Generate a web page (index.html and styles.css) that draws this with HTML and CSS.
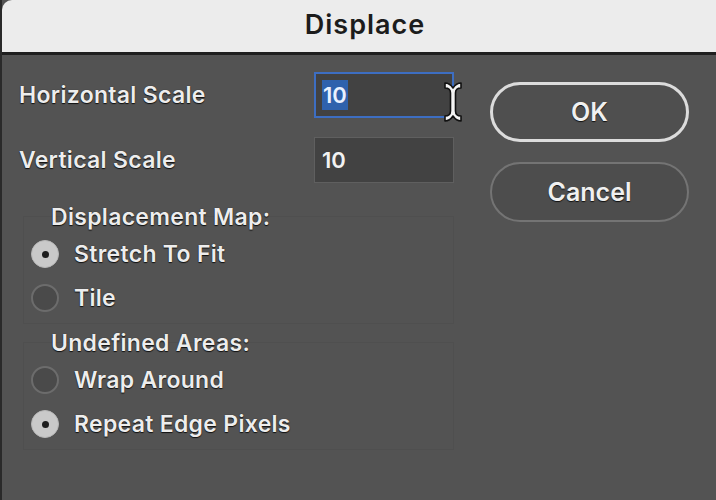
FILE: index.html
```html
<!DOCTYPE html>
<html lang="en">
<head>
  <meta charset="UTF-8" />
  <title>Displace</title>
  <link rel="stylesheet" href="styles.css">
</head>
<body>

  <div class="dialog">
    <!-- Title bar -->
    <div class="titlebar">Displace</div>

    <div class="dialog-body">
      <!-- Left: fields and option groups -->
      <div class="options">
        <div class="field-row">
          <label class="field-label">Horizontal Scale</label>
          <div class="text-field focused">
            <span class="selected-text">10</span>
            <!-- I-beam cursor over the field -->
            <svg class="ibeam" width="22" height="44" viewBox="0 0 22 44">
              <path d="M3 3 C7 3 9 5 11 8 C13 5 15 3 19 3 L19 8 C15 8 13.5 10 13.5 13 L13.5 31 C13.5 34 15 36 19 36 L19 41 C15 41 13 39 11 36 C9 39 7 41 3 41 L3 36 C7 36 8.5 34 8.5 31 L8.5 13 C8.5 10 7 8 3 8 Z"
                    fill="#f4f4f4" stroke="#111" stroke-width="1.6" stroke-linejoin="round"/>
            </svg>
          </div>
        </div>

        <div class="field-row">
          <label class="field-label">Vertical Scale</label>
          <div class="text-field">10</div>
        </div>

        <!-- Displacement Map -->
        <div class="group">
          <div class="group-title">Displacement Map:</div>
          <div class="radio-row">
            <span class="radio checked"></span>
            <span class="radio-label">Stretch To Fit</span>
          </div>
          <div class="radio-row">
            <span class="radio"></span>
            <span class="radio-label">Tile</span>
          </div>
        </div>

        <!-- Undefined Areas -->
        <div class="group group-second">
          <div class="group-title">Undefined Areas:</div>
          <div class="radio-row">
            <span class="radio"></span>
            <span class="radio-label">Wrap Around</span>
          </div>
          <div class="radio-row">
            <span class="radio checked"></span>
            <span class="radio-label">Repeat Edge Pixels</span>
          </div>
        </div>
      </div>

      <!-- Right: buttons -->
      <div class="buttons">
        <button class="btn btn-default">OK</button>
        <button class="btn">Cancel</button>
      </div>
    </div>
  </div>

</body>
</html>
```

FILE: styles.css
```css
/* Page */
body {
  margin: 0;
  background-color: #535353;
  font-family: 'Inter', 'Liberation Sans', sans-serif;
}

.dialog {
  width: 716px;
  height: 500px;
  overflow: hidden;
  box-sizing: border-box;
  border-left: 2px solid #2a2a2a;   /* window edge */
}

/* Light title bar */
.titlebar {
  height: 55px;
  box-sizing: border-box;
  background-color: #ececec;
  border-bottom: 3px solid #1f1f1f;
  border-top-left-radius: 10px;
  display: flex;
  align-items: center;
  justify-content: center;
  padding-left: 12px;
  padding-bottom: 3px;
  font-size: 27px;
  font-weight: 600;
  color: #1c1c1c;
  letter-spacing: 1px;
}

/* Two columns: options and buttons */
.dialog-body {
  display: flex;
  padding-top: 17px;
}

.options {
  width: 452px;
  padding-left: 17px;
  box-sizing: border-box;
}

/* Label + text field rows */
.field-row {
  display: flex;
  align-items: center;
  justify-content: space-between;
  margin-bottom: 19px;
}

.field-label,
.group-title,
.radio-label {
  font-size: 23px;
  font-weight: 600;
  letter-spacing: 0.3px;
  color: #ededed;
  text-shadow: 0 1px 1px rgba(0, 0, 0, 0.8), 0 0 1px rgba(0, 0, 0, 0.6);
}

.text-field {
  position: relative;
  width: 140px;
  height: 46px;
  box-sizing: border-box;
  background-color: #424242;
  border: 1px solid #5f5f5f;
  display: flex;
  align-items: center;
  padding-left: 7px;
  font-size: 22px;
  font-weight: 600;
  color: #f2f2f2;
}

.text-field.focused {
  border: 2px solid #3d6ec2;
  padding-left: 6px;
}

.selected-text {
  background-color: #2f62ad;
  color: #e9f1ff;
  padding: 2px 1px;
}

/* Mouse pointer lying over the field */
.ibeam {
  position: absolute;
  right: -12px;
  top: 6px;
}

/* Option groups with a very faint frame behind them */
.group {
  position: relative;
  z-index: 0;
  margin-top: 3px;
}

.group-second {
  margin-top: 8px;
}

.group-title {
  padding-left: 32px;
  height: 30px;
  line-height: 30px;
}

.group::before {
  content: '';
  position: absolute;
  z-index: -1;
  left: 4px;
  right: 0;
  top: 14px;
  bottom: -4px;
  border: 1px solid #4f4f4f;
}

.radio-row {
  display: flex;
  align-items: center;
  height: 44px;
}

.radio {
  width: 28px;
  height: 28px;
  box-sizing: border-box;
  border-radius: 50%;
  margin-left: 12px;
  margin-right: 15px;
  background-color: #4a4a4a;
  border: 2px solid #6c6c6c;
  position: relative;
}

.radio.checked {
  background-color: #c9c9c9;
  border: 1px solid #b8b8b8;
}

.radio.checked::after {
  content: '';
  position: absolute;
  left: 50%;
  top: 50%;
  width: 7px;
  height: 7px;
  margin: -3.5px 0 0 -3.5px;
  border-radius: 50%;
  background-color: #1e1e1e;
}

/* Buttons */
.buttons {
  display: flex;
  flex-direction: column;
  gap: 20px;
  padding-left: 36px;
  padding-top: 10px;
}

.btn {
  width: 199px;
  height: 60px;
  border-radius: 30px;
  background-color: #4d4d4d;
  border: 2px solid #747474;
  color: #f0f0f0;
  font-family: 'Inter', 'Liberation Sans', sans-serif;
  font-size: 25px;
  font-weight: 600;
  text-shadow: 0 1px 1px rgba(0, 0, 0, 0.8);
}

.btn-default {
  border: 3px solid #dcdcdc;
  background-color: #4f4f4f;
}
```
